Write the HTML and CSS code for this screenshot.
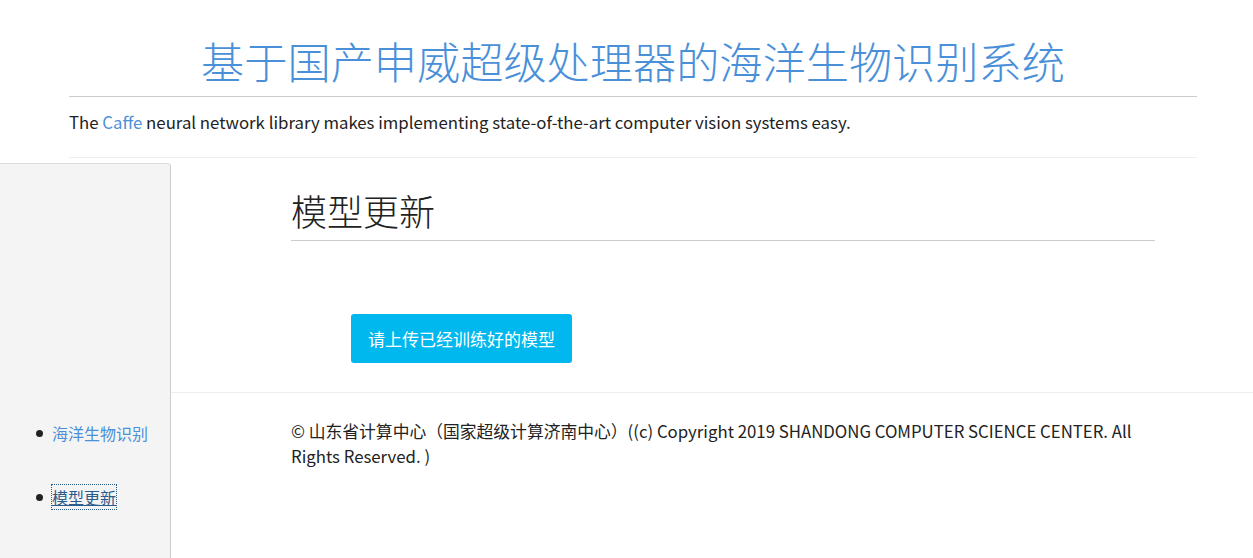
FILE: index.html
```html
<!DOCTYPE html>
<html lang="zh-CN">
<head>
<meta charset="utf-8">
<title>基于国产申威超级处理器的海洋生物识别系统</title>
<link rel="stylesheet" href="styles.css">
</head>
<body>
<header class="masthead">
  <h1 class="site-title">基于国产申威超级处理器的海洋生物识别系统</h1>
  <p class="tagline">The <a class="link" href="#">Caffe</a> neural network library makes implementing state-of-the-art computer vision systems easy.</p>
</header>
<div class="layout">
  <nav class="sidebar">
    <ul class="nav-list">
      <li class="nav-item"><a class="nav-link" href="#">海洋生物识别</a></li>
      <li class="nav-item"><a class="nav-link active" href="#">模型更新</a></li>
    </ul>
  </nav>
  <div class="main">
    <section class="content">
      <h2 class="page-title">模型更新</h2>
      <div class="actions">
        <button class="upload-btn" type="button">请上传已经训练好的模型</button>
      </div>
    </section>
    <footer class="footer">
      <p class="copyright">© 山东省计算中心（国家超级计算济南中心）((c) Copyright 2019 SHANDONG COMPUTER SCIENCE CENTER. All Rights Reserved. )</p>
    </footer>
  </div>
</div>
</body>
</html>
```
FILE: styles.css
```css
html, body {
  margin: 0;
  padding: 0;
  height: 100%;
  background: #fff;
}
body {
  font-family: "Noto Sans CJK SC", "Noto Sans", sans-serif;
  color: #222;
  display: flex;
  flex-direction: column;
  overflow: hidden;
}
.masthead {
  margin-left: 69px;
  width: 1128px;
}
.site-title {
  margin: 0;
  padding-top: 34px;
  padding-bottom: 10px;
  font-size: 43.2px;
  line-height: 52px;
  font-weight: 300;
  color: #4a90d9;
  text-align: center;
  border-bottom: 1px solid #cccccc;
}
.tagline {
  margin: 0;
  padding-top: 12px;
  padding-bottom: 22px;
  font-size: 16.8px;
  line-height: 26px;
  color: #222;
  border-bottom: 1px solid #eeeeee;
}
.link {
  color: #4a90d9;
  text-decoration: none;
}
.layout {
  flex: 1;
  display: flex;
  margin-top: 5px;
}
.sidebar {
  width: 170px;
  flex: none;
  background: #f4f4f4;
  border-top: 1px solid #dddddd;
  border-right: 1px solid #cccccc;
  border-top-right-radius: 4px;
}
.nav-list {
  margin: 0;
  padding: 257px 0 0 52px;
  list-style: none;
}
.nav-item {
  font-size: 16px;
  line-height: 24px;
  margin-bottom: 40px;
}
.nav-item::before {
  content: "";
  display: inline-block;
  width: 7px;
  height: 7px;
  border-radius: 50%;
  background: #222;
  margin-left: -16px;
  margin-right: 9px;
  vertical-align: 3px;
}
.nav-link {
  color: #4a90d9;
  text-decoration: none;
}
.nav-link.active {
  color: #2a5d8c;
  text-decoration: underline;
  outline: 1px dotted #2a5d8c;
  outline-offset: 0;
}
.main {
  flex: 1;
  display: flex;
  flex-direction: column;
}
.content {
  padding: 0 98px 0 120px;
}
.page-title {
  margin: 27px 0 0;
  padding-bottom: 10px;
  font-size: 36px;
  line-height: 40px;
  font-weight: 300;
  color: #222;
  border-bottom: 1px solid #cccccc;
}
.actions {
  padding: 73px 0 29px 60px;
}
.upload-btn {
  display: block;
  height: 49px;
  padding: 0 17px;
  border: none;
  border-radius: 3px;
  background: #00b8ee;
  color: #fff;
  font-family: "Noto Sans CJK SC", sans-serif;
  font-size: 17px;
  cursor: pointer;
}
.footer {
  border-top: 1px solid #eeeeee;
  padding: 26px 98px 0 120px;
}
.copyright {
  margin: 0;
  font-size: 16.8px;
  line-height: 25px;
  color: #222;
}
```
